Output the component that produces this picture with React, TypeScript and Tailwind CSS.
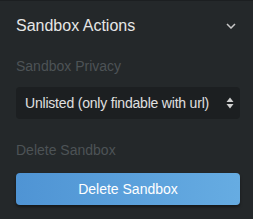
export default function App() {
  return (
    <div
      className="h-[219px] w-[253px] overflow-hidden border-t border-[#1c1f21] bg-[#24282a]"
      style={{ fontFamily: "'Liberation Sans', Arial, sans-serif" }}
    >
      <div className="flex h-[49px] items-center justify-between pl-4 pr-[17px] pt-px">
        <span className="text-[16px] text-[#e6e6e6]">Sandbox Actions</span>
        <svg width="10" height="6" viewBox="0 0 10 6" fill="none">
          <path d="M1 1l4 4 4-4" stroke="#c8c8c8" strokeWidth="1.5" />
        </svg>
      </div>
      <div className="pl-4 pr-[13px]">
        <div className="pt-[6px] text-[14px] text-[#4d5356]">Sandbox Privacy</div>
        <div className="relative mt-[10px] flex h-[32px] items-center rounded-[4px] bg-[#1c1f21] pl-[9px] text-[14px] tracking-[-0.2px] text-[#e0e0e0]">
          <span>Unlisted (only findable with url)</span>
          <svg className="absolute right-[6px] top-[10px]" width="8" height="12" viewBox="0 0 8 12">
            <path d="M4 0.5L7.5 5H0.5z M4 11.5L7.5 7H0.5z" fill="#d0d0d0" />
          </svg>
        </div>
        <div className="pt-[21px] text-[14px] text-[#4d5356]">Delete Sandbox</div>
        <button className="mt-[12px] flex h-[32px] w-full items-center justify-center rounded-[4px] bg-gradient-to-r from-[#4f94d4] to-[#66ace2] text-[14px] text-white shadow-[0_2px_3px_rgba(0,0,0,0.4)]">
          Delete Sandbox
        </button>
      </div>
    </div>
  );
}
